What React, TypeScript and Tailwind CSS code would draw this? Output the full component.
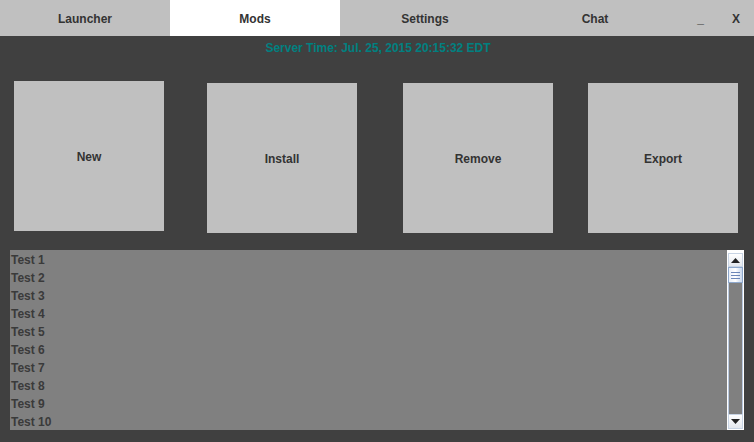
const tabs = ["Launcher", "Mods", "Settings", "Chat"];

const items = Array.from({ length: 10 }, (_, i) => `Test ${i + 1}`);

const BigButton: React.FC<{ label: string; className?: string }> = ({ label, className }) => {
  return (
    <div className={`${className} w-[150px] h-[150px] bg-[#c0c0c0] flex items-center justify-center pt-[2px] text-[12px] font-bold text-[#333333]`}>
      {label}
    </div>
  );
};

const ScrollBar: React.FC = () => {
  return (
    <div className="w-[17px] h-full flex flex-col bg-white pt-[3px] pb-[1px] pl-[1px] pr-[1px]">
      <div className="h-[14px] border border-[#c8d4e4] bg-gradient-to-b from-white to-[#e4e8ee] flex items-center justify-center">
        <svg width="9" height="5" viewBox="0 0 9 5"><path d="M0 5 L4.5 0 L9 5 Z" fill="#222" /></svg>
      </div>
      <div className="h-[16px] border border-[#8ea8cc] bg-gradient-to-r from-[#e8eef8] via-white to-[#c8d6ec] flex flex-col items-center justify-center gap-[2px]">
        <div className="w-[9px] h-[1px] bg-[#6b86b8]"></div>
        <div className="w-[9px] h-[1px] bg-[#6b86b8]"></div>
        <div className="w-[9px] h-[1px] bg-[#6b86b8]"></div>
      </div>
      <div className="grow bg-[#808080] border-l border-r border-[#b8c8e0]"></div>
      <div className="h-[15px] border border-[#c8d4e4] bg-gradient-to-b from-white to-[#e4e8ee] flex items-center justify-center">
        <svg width="9" height="5" viewBox="0 0 9 5"><path d="M0 0 L4.5 5 L9 0 Z" fill="#222" /></svg>
      </div>
    </div>
  );
};

export default function App() {
  return (
    <div className="w-[754px] h-[442px] bg-[#404040] flex flex-col overflow-hidden" style={{ fontFamily: '"Liberation Sans", Arial, sans-serif' }}>
      <div className="h-[36px] bg-[#c0c0c0] flex text-[12px] font-bold text-[#333333]">
        {tabs.map((t) => (
          <div key={t} className={`w-[170px] flex items-center justify-center pt-[2px] ${t === "Mods" ? "bg-white" : ""}`}>
            {t}
          </div>
        ))}
        <div className="w-[40px] flex items-center justify-center pt-[2px] pl-[1px]">_</div>
        <div className="grow flex items-center justify-center pt-[2px] pr-[2px]">X</div>
      </div>
      <div className="h-[22px] flex items-center justify-center pt-[2px] pl-[2px] text-[12px] font-bold text-[#008080]">
        Server Time: Jul. 25, 2015 20:15:32 EDT
      </div>
      <div className="flex items-start">
        <BigButton label="New" className="ml-[14px] mt-[23px]" />
        <BigButton label="Install" className="ml-[43px] mt-[25px]" />
        <BigButton label="Remove" className="ml-[46px] mt-[25px]" />
        <BigButton label="Export" className="ml-[35px] mt-[25px]" />
      </div>
      <div className="ml-[10px] mt-[17px] w-[734px] h-[180px] bg-[#808080] flex">
        <div className="grow flex flex-col pl-[1px] pt-[1px]">
          {items.map((it) => (
            <div key={it} className="h-[18px] leading-[18px] text-[12px] font-bold text-[#3a3a3a]">{it}</div>
          ))}
        </div>
        <ScrollBar />
      </div>
    </div>
  );
}
